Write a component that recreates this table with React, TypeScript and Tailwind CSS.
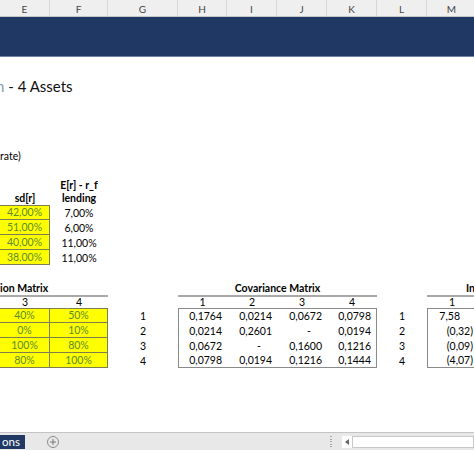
import React from 'react';

// Spreadsheet column widths (E..M), written out so Tailwind picks them up
const COLS: [string, string][] = [
  ['E', 'w-[50px]'],
  ['F', 'w-[58px]'],
  ['G', 'w-[70px]'],
  ['H', 'w-[49px]'],
  ['I', 'w-[50px]'],
  ['J', 'w-[50px]'],
  ['K', 'w-[50px]'],
  ['L', 'w-[50px]'],
  ['M', 'w-[50px]'],
];

const sdRows = [
  { sd: '42,00%', lending: '7,00%' },
  { sd: '51,00%', lending: '6,00%' },
  { sd: '40,00%', lending: '11,00%' },
  { sd: '38,00%', lending: '11,00%' },
];

const corr = [
  ['40%', '50%'],
  ['0%', '10%'],
  ['100%', '80%'],
  ['80%', '100%'],
];

const cov = [
  ['0,1764', '0,0214', '0,0672', '0,0798'],
  ['0,0214', '0,2601', '-', '0,0194'],
  ['0,0672', '-', '0,1600', '0,1216'],
  ['0,0798', '0,0194', '0,1216', '0,1444'],
];

const inv = ['7,58', '(0,32)', '(0,09)', '(4,07)'];

// excel cells sit their text on the bottom of the row (rows stretch the cells)
const cell = 'shrink-0 flex items-end pb-[1px] leading-[12px]';

const Yellow: React.FC<{ w: string; first?: boolean; children: React.ReactNode }> = ({ w, first, children }) => (
  <div
    className={`${w} ${cell} justify-center bg-[#ffff00] text-[#5c8a2e] border-r border-b border-[#7d7d50] ${
      first ? 'border-t' : ''
    }`}
  >
    {children}
  </div>
);

export default function App() {
  return (
    <div className="w-[474px] h-[450px] overflow-hidden bg-white flex flex-col font-['Lato','Liberation_Sans',sans-serif] text-[10.5px] text-black">
      {/* column letters */}
      <div className="flex h-[17px] shrink-0 bg-[#efefef] border-b border-[#c6c6c6]">
        {COLS.map(([l, w]) => (
          <div key={l} className={`${w} shrink-0 flex items-center justify-center pt-[2px] border-r border-[#d8d8d8] text-[10px] text-[#444]`}>
            {l}
          </div>
        ))}
      </div>

      {/* navy banner */}
      <div className="h-[40px] shrink-0 bg-[#1f3864] border-b border-[#6f82a6]" />

      {/* title */}
      <div className="mt-[21px] h-[16px] shrink-0 flex items-center whitespace-nowrap -ml-[4px] text-[15px] leading-[16px] text-[#111]">
        <span className="text-[#8799bb]">n</span>
        <span>&nbsp;- 4 Assets</span>
      </div>

      <div className={`mt-[54px] h-[15px] ${cell} whitespace-nowrap`}>rate)</div>

      {/* sd / lending table */}
      <div className="mt-[14px] flex shrink-0 h-[15px] font-bold whitespace-nowrap">
        <div className="w-[50px] shrink-0" />
        <div className={`w-[58px] ${cell} justify-center`}>E[r] - r_f</div>
      </div>
      <div className="flex shrink-0 h-[13px] font-bold">
        <div className={`w-[50px] ${cell} justify-center`}>sd[r]</div>
        <div className={`w-[58px] ${cell} justify-center`}>lending</div>
      </div>
      {sdRows.map((r, i) => (
        <div key={i} className="flex shrink-0 h-[15px]">
          <Yellow w="w-[50px]" first={i === 0}>
            {r.sd}
          </Yellow>
          <div className={`w-[58px] ${cell} justify-center`}>{r.lending}</div>
        </div>
      ))}

      {/* matrix titles */}
      <div className="mt-[16px] flex shrink-0 h-[16px] font-bold whitespace-nowrap">
        <div className={`w-[108px] ${cell} border-b-2 border-[#a9a9a9]`}>ion Matrix</div>
        <div className="w-[70px] shrink-0" />
        <div className={`w-[199px] ${cell} justify-center border-b-2 border-[#a9a9a9]`}>Covariance Matrix</div>
        <div className="w-[50px] shrink-0" />
        <div className={`w-[50px] ${cell} pl-[39px] border-b-2 border-[#a9a9a9]`}>Inverse Covariance Matrix</div>
      </div>
      <div className="flex shrink-0 h-[11px] leading-[11px]">
        <div className="w-[50px] shrink-0 text-center">3</div>
        <div className="w-[58px] shrink-0 text-center">4</div>
        <div className="w-[70px] shrink-0" />
        <div className="w-[49px] shrink-0 text-center">1</div>
        <div className="w-[50px] shrink-0 text-center">2</div>
        <div className="w-[50px] shrink-0 text-center">3</div>
        <div className="w-[50px] shrink-0 text-center">4</div>
        <div className="w-[50px] shrink-0" />
        <div className="w-[50px] shrink-0 text-center">1</div>
      </div>
      {corr.map((r, i) => {
        const last = i === corr.length - 1;
        const edge = `${i === 0 ? 'border-t' : ''} ${last ? 'border-b' : ''}`;
        return (
          <div key={i} className="flex shrink-0 h-[15px]">
            <Yellow w="w-[50px]" first={i === 0}>
              {r[0]}
            </Yellow>
            <Yellow w="w-[58px]" first={i === 0}>
              {r[1]}
            </Yellow>
            <div className={`w-[70px] ${cell} justify-center`}>{i + 1}</div>
            {cov[i].map((v, j) => (
              <div
                key={j}
                className={`${j === 0 ? 'w-[49px] border-l' : 'w-[50px]'} ${j === 3 ? 'border-r' : ''} ${edge} border-[#8a8a8a] ${cell} justify-end ${
                  v === '-' ? 'pr-[16px]' : 'pr-[5px]'
                }`}
              >
                {v}
              </div>
            ))}
            <div className={`w-[50px] ${cell} justify-center`}>{i + 1}</div>
            <div
              className={`w-[50px] ${cell} justify-end border-l border-[#8a8a8a] ${edge} ${
                inv[i].startsWith('(') ? 'pr-[4px]' : 'pr-[17px]'
              }`}
            >
              {inv[i]}
            </div>
          </div>
        );
      })}

      <div className="flex-1" />

      {/* sheet tab bar */}
      <div className="h-[18px] shrink-0 flex items-center bg-[#e8e8e8] border-t border-[#c4c4c4]">
        <div className="w-[25px] h-[14px] shrink-0 bg-[#1f3864] text-white text-[11.5px] leading-[14px] pl-[2px]">ons</div>
        <div className="ml-[22px] w-[12px] h-[12px] rounded-full border border-[#8c8c8c] flex items-center justify-center">
          <svg width="8" height="8" viewBox="0 0 8 8">
            <path d="M4 1v6M1 4h6" stroke="#777" strokeWidth="1" />
          </svg>
        </div>
        <div className="flex-1" />
        <div className="w-[4px] h-[11px] flex flex-col justify-between items-center">
          {[0, 1, 2, 3, 4].map((k) => (
            <div key={k} className="w-[2px] h-[1px] bg-[#a8a8a8]" />
          ))}
        </div>
        <div className="ml-[9px] w-[10px] h-[12px] flex items-center justify-center bg-white">
          <svg width="4" height="6" viewBox="0 0 4 6">
            <path d="M4 0L0 3l4 3z" fill="#666" />
          </svg>
        </div>
        <div className="w-[122px] h-[12px] bg-white border border-[#c8c8c8]" />
      </div>
    </div>
  );
}
